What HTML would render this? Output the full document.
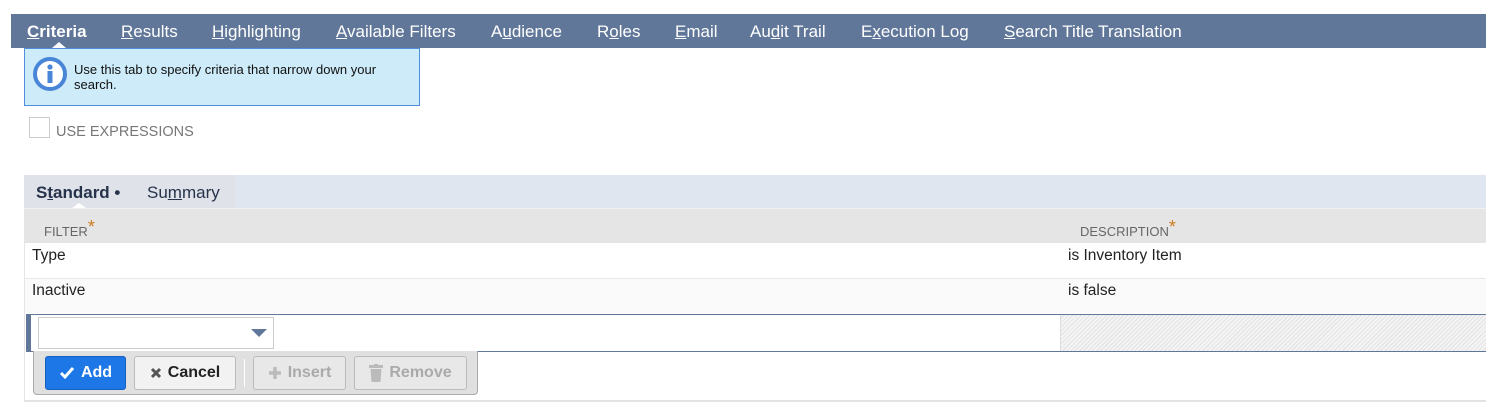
<!DOCTYPE html>
<html><head><style>
*{margin:0;padding:0;box-sizing:border-box}
body{width:1486px;height:420px;background:#fff;font-family:"Liberation Sans",Arial,sans-serif;position:relative;overflow:hidden}
.abs{position:absolute}
.nav{left:11px;top:14px;width:1475px;height:34px;background:#607799}
.nav span{position:absolute;top:8px;color:#fff;font-size:17px;white-space:nowrap}
u{text-decoration:underline}
.btn{position:absolute;top:5px;height:34px;border:1px solid #bbb;border-radius:3px;font-size:16px;font-weight:bold;display:flex;align-items:center;justify-content:center;gap:6px}
</style></head><body>
<div class="abs nav">
<span style="left:16px;font-weight:bold"><u>C</u>riteria</span>
<span style="left:110px"><u>R</u>esults</span>
<span style="left:201px"><u>H</u>ighlighting</span>
<span style="left:325px"><u>A</u>vailable Filters</span>
<span style="left:480px">A<u>u</u>dience</span>
<span style="left:586px">R<u>o</u>les</span>
<span style="left:664px"><u>E</u>mail</span>
<span style="left:739px">Au<u>d</u>it Trail</span>
<span style="left:850px">E<u>x</u>ecution Log</span>
<span style="left:993px"><u>S</u>earch Title Translation</span>
</div>
<div class="abs" style="left:52px;top:42px;width:0;height:0;border-left:7px solid transparent;border-right:7px solid transparent;border-bottom:6px solid #fff"></div>
<div class="abs" style="left:24px;top:48px;width:396px;height:58px;background:#cdebf8;border:1px solid #4f8fd9"></div>
<svg class="abs" style="left:32px;top:56px" width="36" height="36" viewBox="0 0 36 36"><circle cx="18" cy="18" r="15" fill="#fff" stroke="#4a86d8" stroke-width="4"/><circle cx="18" cy="11" r="2.6" fill="#4a86d8"/><rect x="15.5" y="15" width="5" height="12" fill="#4a86d8"/></svg>
<div class="abs" style="left:74px;top:62px;font-size:13px;line-height:15px;color:#111;width:320px">Use this tab to specify criteria that narrow down your search.</div>
<div class="abs" style="left:29px;top:117px;width:21px;height:21px;border:1px solid #ccc"></div>
<div class="abs" style="left:56px;top:124px;font-size:14.5px;color:#777">USE EXPRESSIONS</div>
<div class="abs" style="left:24px;top:175px;width:1462px;height:33px;background:#e0e6ef"></div>
<div class="abs" style="left:24px;top:175px;width:211px;height:33px;background:#dfe2e9"></div>
<div class="abs" style="left:36px;top:183px;font-size:17px;font-weight:bold;color:#26334a">S<u>t</u>andard •</div>
<div class="abs" style="left:147px;top:183px;font-size:17px;color:#26334a">Su<u>m</u>mary</div>
<div class="abs" style="left:72px;top:203px;width:0;height:0;border-left:7px solid transparent;border-right:7px solid transparent;border-bottom:5px solid #fff"></div>
<div class="abs" style="left:24px;top:208px;width:1462px;height:35px;background:#e5e5e5;border-top:1px solid #f0f0f0"></div>
<div class="abs" style="left:44px;top:220px;font-size:13px;color:#666">FILTER<span style="color:#d07a20;font-size:18px;position:relative;top:-3px">*</span></div>
<div class="abs" style="left:1080px;top:220px;font-size:13px;color:#666">DESCRIPTION<span style="color:#d07a20;font-size:18px;position:relative;top:-3px">*</span></div>
<div class="abs" style="left:24px;top:243px;width:1462px;height:35px;background:#fff;border-left:1px solid #e5e5e5"></div>
<div class="abs" style="left:24px;top:278px;width:1462px;height:35px;background:#fafafa;border-top:1px solid #e8e8e8;border-left:1px solid #e5e5e5"></div>
<div class="abs" style="left:32px;top:247px;font-size:15.5px;color:#222">Type</div>
<div class="abs" style="left:1068px;top:247px;font-size:15.5px;color:#222">is Inventory Item</div>
<div class="abs" style="left:32px;top:282px;font-size:15.5px;color:#222">Inactive</div>
<div class="abs" style="left:1068px;top:282px;font-size:15.5px;color:#222">is false</div>
<div class="abs" style="left:26px;top:314px;width:1460px;height:38px;border-top:1px solid #607799;border-bottom:1px solid #607799;border-left:5px solid #607799;background:#fff"></div>
<div class="abs" style="left:1060px;top:315px;width:426px;height:36px;border-left:1px solid #ddd;background:repeating-linear-gradient(135deg,#f4f4f4 0 2px,#e2e2e2 2px 3px)"></div>
<div class="abs" style="left:38px;top:317px;width:236px;height:32px;border:1px solid #ccc;background:#fff"></div>
<div class="abs" style="left:251px;top:329px;width:0;height:0;border-left:8px solid transparent;border-right:8px solid transparent;border-top:8px solid #607799"></div>
<div class="abs" style="left:33px;top:351px;width:445px;height:44px;background:#e0e0e0;border:1px solid #aaa;border-top:none;border-radius:0 0 4px 4px">
<div class="btn" style="left:11px;width:81px;background:#1e77e6;border-color:#1760c0;color:#fff"><svg width="16" height="14" viewBox="0 0 16 14"><path d="M2 7l4 4 8-9" stroke="#fff" stroke-width="3" fill="none"/></svg>Add</div>
<div class="btn" style="left:100px;width:102px;background:#f2f2f2;color:#222"><svg width="12" height="12" viewBox="0 0 12 12"><path d="M2 2l8 8M10 2l-8 8" stroke="#555" stroke-width="3"/></svg>Cancel</div>
<div class="abs" style="left:210px;top:8px;width:1px;height:28px;background:#fff"></div>
<div class="btn" style="left:219px;width:93px;background:#e8e8e8;color:#aaa"><svg width="14" height="14" viewBox="0 0 14 14"><path d="M7 1v12M1 7h12" stroke="#bbb" stroke-width="3.5"/></svg>Insert</div>
<div class="btn" style="left:320px;width:113px;background:#e8e8e8;color:#aaa"><svg width="14" height="18" viewBox="0 0 14 18"><rect x="0" y="1" width="14" height="3" fill="#bbb"/><rect x="5" y="0" width="4" height="2" fill="#bbb"/><path d="M1.5 5h11l-1 13h-9z" fill="#bbb"/></svg>Remove</div>
</div>
<div class="abs" style="left:24px;top:400px;width:1462px;height:2px;background:#e3e3e3"></div>
<div class="abs" style="left:24px;top:243px;width:1px;height:158px;background:#e5e5e5"></div>
</body></html>
